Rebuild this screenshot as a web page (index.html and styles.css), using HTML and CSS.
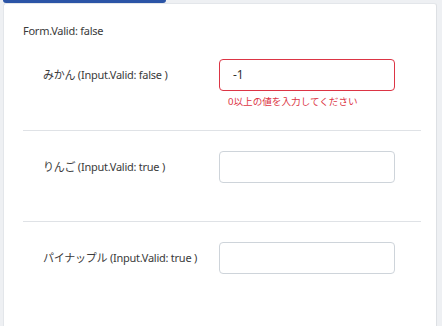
FILE: index.html
```html
<!DOCTYPE html>
<html lang="ja">
<head>
<meta charset="utf-8">
<link rel="stylesheet" href="styles.css">
</head>
<body>
<div class="tabbar"><div class="tab-active"></div></div>
<div class="card">
  <div class="form-state">Form.Valid: false</div>
  <div class="row">
    <label class="label">みかん (Input.Valid: false )</label>
    <div class="field">
      <div class="input invalid">-1</div>
      <div class="feedback">0以上の値を入力してください</div>
    </div>
  </div>
  <div class="row">
    <label class="label">りんご (Input.Valid: true )</label>
    <div class="field">
      <div class="input"></div>
      <div class="feedback"></div>
    </div>
  </div>
  <div class="row last">
    <label class="label">パイナップル (Input.Valid: true )</label>
    <div class="field">
      <div class="input"></div>
      <div class="feedback"></div>
    </div>
  </div>
</div>
</body>
</html>
```
FILE: styles.css
```css
html, body {
  margin: 0;
  padding: 0;
  background: #eef0f3;
  width: 442px;
  height: 326px;
  overflow: hidden;
  font-family: "Noto Sans", "Noto Sans CJK JP", sans-serif;
  font-size: 12px;
  color: #3a3a3a;
}
.tabbar {
  height: 3px;
  padding-left: 3px;
}
.tab-active {
  width: 163px;
  height: 3px;
  background: #2b54a6;
  border-radius: 0 0 3px 3px;
}
.card {
  margin: 0 5px 0 3px;
  background: #fff;
  border: 1px solid #e3e6ea;
  border-right-color: #dde0e4;
  border-radius: 3px 3px 0 0;
  padding: 19px 15px 0 19px;
  height: 330px;
  box-sizing: border-box;
}
.form-state {
  height: 16px;
  line-height: 16px;
  font-size: 11px;
  letter-spacing: -0.25px;
}
.row {
  display: grid;
  grid-template-columns: 196px 176px;
  padding: 20px 0 20.5px;
  border-bottom: 1px solid #dfe2e6;
}
.row.last {
  border-bottom: none;
}
.label {
  padding-left: 20px;
  height: 32px;
  line-height: 32px;
  font-size: 11px;
  letter-spacing: -0.25px;
  white-space: nowrap;
}
.field {
  display: flex;
  flex-direction: column;
}
.input {
  height: 32px;
  box-sizing: border-box;
  border: 1px solid #ced4da;
  border-radius: 4px;
  padding: 0 13px;
  line-height: 30px;
  font-size: 12px;
  color: #333;
}
.input.invalid {
  border-color: #dc3545;
}
.feedback {
  height: 18px;
  line-height: 14px;
  padding: 4px 0 0 9px;
  box-sizing: border-box;
  font-size: 9.6px;
  color: #dc3545;
}
```
